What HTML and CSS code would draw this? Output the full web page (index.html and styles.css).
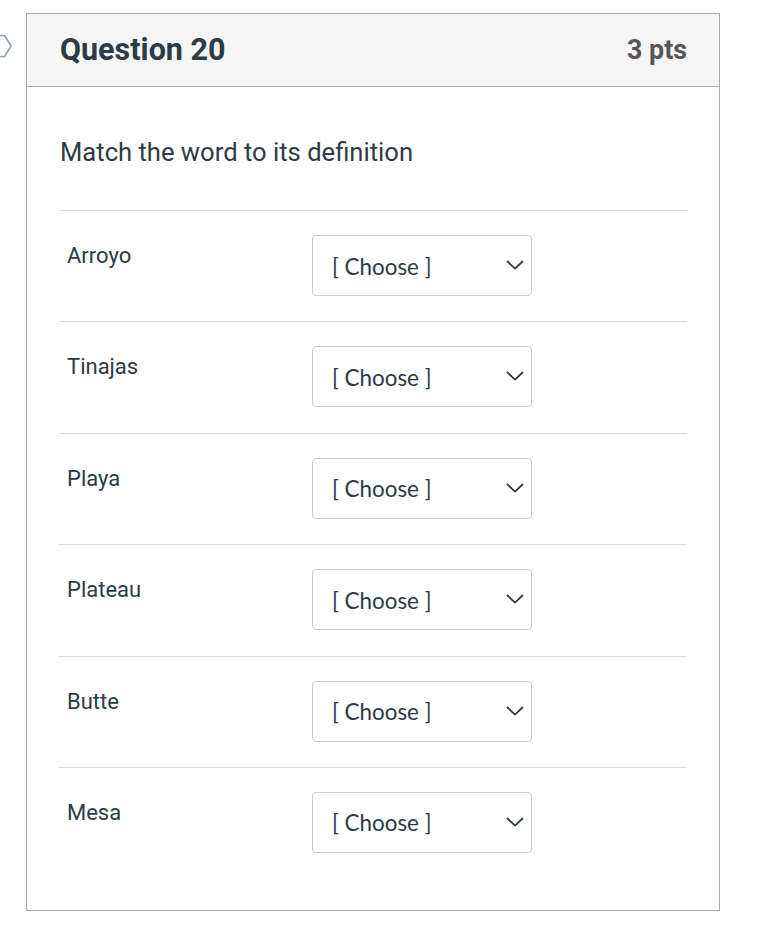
FILE: index.html
```html
<!DOCTYPE html>
<html>
<head>
<meta charset="utf-8">
<link rel="stylesheet" href="styles.css">
</head>
<body>
<div class="page">
  <svg class="side-icon" width="14" height="24" viewBox="0 0 14 24"><path d="M-2 1.5 H4.5 L11 12 L4.5 22.5 H-2" fill="#fff" stroke="#8ea3b4" stroke-width="1.6" stroke-linejoin="round"/></svg>
  <div class="card">
    <div class="card-header">
      <h2 class="title">Question 20</h2>
      <span class="pts">3 pts</span>
    </div>
    <div class="card-body">
      <p class="prompt">Match the word to its definition</p>
      <div class="rows">
        <div class="row"><div class="word">Arroyo</div><div class="select"><span>[ Choose ]</span><svg width="18" height="10" viewBox="0 0 18 10"><path d="M1 1 L9 8.6 L17 1" fill="none" stroke="#2d3b45" stroke-width="1.8"/></svg></div></div>
        <div class="row"><div class="word">Tinajas</div><div class="select"><span>[ Choose ]</span><svg width="18" height="10" viewBox="0 0 18 10"><path d="M1 1 L9 8.6 L17 1" fill="none" stroke="#2d3b45" stroke-width="1.8"/></svg></div></div>
        <div class="row"><div class="word">Playa</div><div class="select"><span>[ Choose ]</span><svg width="18" height="10" viewBox="0 0 18 10"><path d="M1 1 L9 8.6 L17 1" fill="none" stroke="#2d3b45" stroke-width="1.8"/></svg></div></div>
        <div class="row"><div class="word">Plateau</div><div class="select"><span>[ Choose ]</span><svg width="18" height="10" viewBox="0 0 18 10"><path d="M1 1 L9 8.6 L17 1" fill="none" stroke="#2d3b45" stroke-width="1.8"/></svg></div></div>
        <div class="row"><div class="word">Butte</div><div class="select"><span>[ Choose ]</span><svg width="18" height="10" viewBox="0 0 18 10"><path d="M1 1 L9 8.6 L17 1" fill="none" stroke="#2d3b45" stroke-width="1.8"/></svg></div></div>
        <div class="row"><div class="word">Mesa</div><div class="select"><span>[ Choose ]</span><svg width="18" height="10" viewBox="0 0 18 10"><path d="M1 1 L9 8.6 L17 1" fill="none" stroke="#2d3b45" stroke-width="1.8"/></svg></div></div>
      </div>
    </div>
  </div>
</div>
</body>
</html>
```

FILE: styles.css
```css
* { box-sizing: border-box; }
html, body { margin: 0; padding: 0; background: #fff; }
body { font-family: Roboto, "Liberation Sans", sans-serif; color: #2d3b45; }

.page {
  position: relative;
  padding: 13px 0 0 26px;
}
.side-icon {
  position: absolute;
  left: 0;
  top: 34px;
}
.card {
  width: 694px;
  border: 1px solid #ababab;
}
.card-header {
  height: 73px;
  background: #f5f5f5;
  border-bottom: 1px solid #ababab;
  display: flex;
  align-items: center;
  justify-content: space-between;
  padding: 1px 32px 0 33px;
}
.title {
  margin: 0;
  font-size: 30.5px;
  font-weight: 700;
  color: #2d3b45;
  line-height: 1;
}
.pts {
  font-size: 26.8px;
  font-weight: 700;
  color: #565656;
  line-height: 1;
}
.card-body {
  padding: 51px 32px 32px 32px;
}
.prompt {
  margin: 0 0 43px 1px;
  font-size: 25.6px;
  line-height: 29px;
  color: #2d3b45;
}
.row {
  display: flex;
  align-items: flex-start;
  border-top: 1px solid #dcdcdc;
  padding: 24px 0 25.4px 0;
}
.word {
  width: 253px;
  padding: 8px 0 0 8px;
  font-size: 22px;
  line-height: 25px;
  color: #2d3b45;
}
.select {
  width: 220px;
  height: 61px;
  border: 1px solid #c7cdd1;
  border-radius: 4px;
  display: flex;
  align-items: center;
  justify-content: space-between;
  padding: 0 7px 0 19px;
  font-family: Lato, "Noto Sans", sans-serif;
  font-size: 22.4px;
  color: #2d3b45;
  background: #fff;
}
.select span { padding-top: 1px; }
.select svg { margin-top: -1px; }
```
